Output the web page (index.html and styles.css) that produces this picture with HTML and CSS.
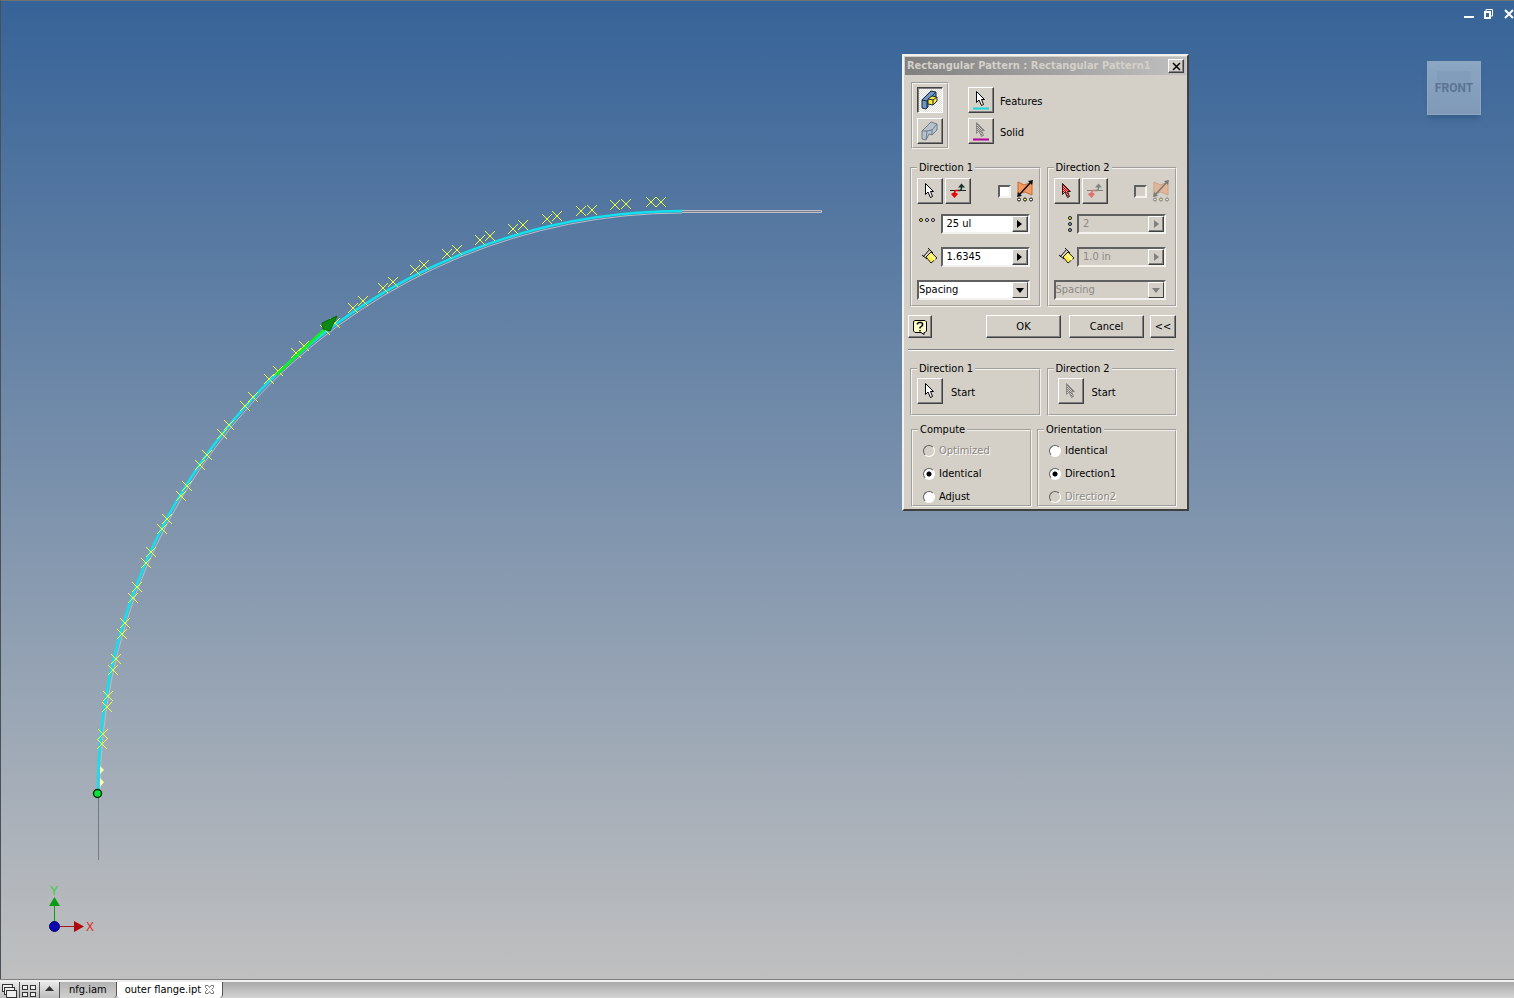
FILE: index.html
```html
<!DOCTYPE html>
<html lang="en">
<head>
  <meta charset="UTF-8">
  <meta name="viewport" content="width=device-width, initial-scale=1.0">
  <title>outer flange.ipt</title>
  <link rel="stylesheet" href="styles.css">
</head>
<body>
  <!-- Shared icons -->
  <svg class="defs" width="0" height="0" aria-hidden="true">
    <defs>
      <path id="x" d="M-5 -5L5 5M-5 5L5 -5"/>
      <path id="cursor" d="M1.500 .5V11.500L4 9L6.500 14.500L8.500 13.500L6.500 8.500H9.500Z"/>
      <pattern id="dither" width="2" height="2" patternUnits="userSpaceOnUse">
        <rect width="2" height="2" fill="#d4d0c8"/>
        <path d="M0 0h1v1H0zM1 1h1v1H1z" fill="#777"/>
      </pattern>
      <pattern id="ditherRed" width="2" height="2" patternUnits="userSpaceOnUse">
        <rect width="2" height="2" fill="#ff9090"/>
        <path d="M0 0h1v1H0zM1 1h1v1H1z" fill="#e00000"/>
      </pattern>
      <g id="flip">
        <path d="M1 8.500H6M12 8.500H17" stroke="#222" fill="none"/>
        <path d="M9 8.500H7C6 8.500 5.500 9 5.500 12" stroke="#f00000" stroke-width="1.500" fill="none"/>
        <path d="M2 12L5.500 10L9 12L5.500 16Z" fill="#f00000"/>
        <path d="M9 8.500H11C12 8.500 12.500 8 12.500 5" stroke="#163030" stroke-width="1.500" fill="none"/>
        <path d="M9 5.500H16L12.500 1.500Z" fill="#163030"/>
      </g>
      <g id="midplane">
        <path d="M2 2L8 5L16 2V15L9 12L2 14Z" fill="#f59a62" stroke="#c36a32"/>
        <path d="M3 15L15 2" stroke="#111" stroke-width="1.500"/>
        <path d="M17 0L16 5L12 1ZM1 17L2 12L6 16Z" fill="#111"/>
        <g fill="#fff" stroke="#111"><circle cx="3" cy="19.500" r="1.500"/><circle cx="9" cy="19.500" r="1.500" fill="#ff5"/><circle cx="15" cy="19.500" r="1.500"/></g>
      </g>
      <g id="spacing">
        <path d="M4 9L9 4L15 10L9 15Z" fill="#ffec4a" stroke="#222"/>
        <path d="M8 7L13 12" stroke="#fff9ac" stroke-width="2"/>
        <path d="M1 9L8 1M0 7L5 11M6 0L11 5" stroke="#111" fill="none"/>
      </g>
    </defs>
  </svg>

  <main class="viewport">
    <svg class="scene" width="100%" height="100%" aria-label="Sketch">
      <!-- flange profile -->
      <g fill="none">
        <path d="M682 210.500H821.500V212.500H682" stroke="#c3bfc7"/>
        <path d="M682 211.500H821" stroke="#777f94"/>
        <path d="M98.500 794V860" stroke="#77777c"/>
        <path d="M100 793A583 582 0 0 1 682 213" stroke="#b8bec9"/>
        <path d="M98 793A584 582 0 0 1 682 211" stroke="#12e0ee" stroke-width="2.500"/>
      </g>

      <!-- pattern occurrences -->
      <g class="marks">
        <use href="#x" x="651" y="202"/><use href="#x" x="661" y="202"/>
        <use href="#x" x="615" y="205"/><use href="#x" x="626" y="204"/>
        <use href="#x" x="581" y="211"/><use href="#x" x="592" y="210"/>
        <use href="#x" x="547" y="219"/><use href="#x" x="557" y="216"/>
        <use href="#x" x="513" y="229"/><use href="#x" x="523" y="225"/>
        <use href="#x" x="480" y="240"/><use href="#x" x="490" y="236"/>
        <use href="#x" x="447" y="254"/><use href="#x" x="457" y="250"/>
        <use href="#x" x="415" y="270"/><use href="#x" x="424" y="265"/>
        <use href="#x" x="383" y="288"/><use href="#x" x="393" y="282"/>
        <use href="#x" x="353" y="308"/><use href="#x" x="363" y="301"/>
        <use href="#x" x="325" y="330"/><use href="#x" x="335" y="323"/>
        <use href="#x" x="296" y="353"/><use href="#x" x="304" y="346"/>
        <use href="#x" x="269" y="379"/><use href="#x" x="278" y="371"/>
        <use href="#x" x="245" y="406"/><use href="#x" x="253" y="397"/>
        <use href="#x" x="222" y="434"/><use href="#x" x="229" y="425"/>
        <use href="#x" x="200" y="465"/><use href="#x" x="207" y="455"/>
        <use href="#x" x="181" y="496"/><use href="#x" x="187" y="486"/>
        <use href="#x" x="162" y="529"/><use href="#x" x="167" y="519"/>
        <use href="#x" x="146" y="563"/><use href="#x" x="151" y="552"/>
        <use href="#x" x="133" y="598"/><use href="#x" x="137" y="587"/>
        <use href="#x" x="122" y="634"/><use href="#x" x="125" y="623"/>
        <use href="#x" x="113" y="670"/><use href="#x" x="116" y="659"/>
        <use href="#x" x="107" y="707"/><use href="#x" x="108" y="696"/>
        <use href="#x" x="102" y="744"/><use href="#x" x="103" y="734"/>
      </g>
      <path d="M100 766L104 770L100 774ZM100 778L104 782L100 787Z" fill="#ffffb4"/>
      <circle cx="97.500" cy="793.500" r="4" fill="#0be43c" stroke="#063006" stroke-width="1.500"/>

      <!-- pattern direction -->
      <path d="M276 375L328 326" stroke="#10f020" stroke-width="2.500"/>
      <path d="M337 316L322 323L323 329L330 331Z" fill="#0a8a12" stroke="#066b0b"/>

      <!-- axis triad -->
      <path d="M54.500 926V906" stroke="#0c9c14"/>
      <path d="M54.500 897L60 906H49Z" fill="#0c9c14"/>
      <path d="M54 926.500H75" stroke="#a81818"/>
      <path d="M74 921L84 926.500L74 932Z" fill="#b00808"/>
      <circle cx="54.500" cy="926.500" r="5" fill="#0808b0" stroke="#040470"/>
      <text class="axis" x="50" y="895" fill="#2fd23a">Y</text>
      <text class="axis" x="86" y="931" fill="#e02828">X</text>
    </svg>

    <div class="window-buttons">
      <button type="button" aria-label="Minimize"><svg width="12" height="12"><path d="M2 9H12" stroke="#fff" stroke-width="2"/></svg></button>
      <button type="button" aria-label="Restore"><svg width="12" height="12" fill="none" stroke="#fff"><path d="M4 3V1.500H10.500V8H9"/><rect x="3" y="4" width="5" height="6" stroke-width="2"/></svg></button>
      <button type="button" aria-label="Close"><svg width="12" height="12"><path d="M3 2L11 10M11 2L3 10" stroke="#fff" stroke-width="2"/></svg></button>
    </div>

    <button type="button" class="view-cube"><span>FRONT</span></button>

    <form class="dialog">
      <div class="title-bar">
        <span>Rectangular Pattern : Rectangular Pattern1</span>
        <button type="button" class="close" aria-label="Close"><svg width="9" height="9"><path d="M1 1L8 8M8 1L1 8" stroke="#000" stroke-width="1.500"/></svg></button>
      </div>

      <div class="dialog-body">
        <div class="selectors">
          <div class="mode">
            <button type="button" class="tool pressed" aria-label="Pattern features">
              <svg width="20" height="20" stroke="#182a3c" stroke-linejoin="round">
                <path d="M2 10L11 1L16 2V6L8 11V17L6 19L2 18Z" fill="#6d98c4"/>
                <path d="M2 10L7 11L16 2M7 11V18" fill="none"/>
                <path d="M8 9L12 6L17 7V11L13 15L8 14Z" fill="#ffe93c"/>
                <path d="M8 9L13 10L17 7M13 10V15" fill="none"/>
              </svg>
            </button>
            <button type="button" class="tool" aria-label="Pattern solid">
              <svg width="20" height="20" stroke="#6f7b88" stroke-linejoin="round">
                <path d="M2 10L11 1L17 3V9L12 14L9 13L6 19L2 18Z" fill="#b5c2cf"/>
                <path d="M2 10L7 10L12 9L17 3M7 10L6 18M12 9V14" fill="none"/>
              </svg>
            </button>
          </div>
          <div class="picks">
            <div class="pick">
              <button type="button" id="features" class="tool"><svg width="20" height="22"><use href="#cursor" x="4" y="2" fill="#fff" stroke="#000"/><path d="M2 19.500H18" stroke="#18d6d6" stroke-width="2"/></svg></button>
              <label for="features">Features</label>
            </div>
            <div class="pick">
              <button type="button" id="solid" class="tool"><svg width="20" height="22"><use href="#cursor" x="4" y="2" fill="url(#dither)" stroke="#888"/><path d="M2 19.500H18" stroke="#b4009c" stroke-width="2"/></svg></button>
              <label for="solid">Solid</label>
            </div>
          </div>
        </div>

        <div class="columns">
          <fieldset class="direction">
            <legend>Direction 1</legend>
            <div class="tools">
              <button type="button" class="tool" aria-label="Path"><svg width="18" height="18"><use href="#cursor" x="3" y="1" fill="#fff" stroke="#000"/></svg></button>
              <button type="button" class="tool" aria-label="Flip"><svg width="18" height="18"><use href="#flip"/></svg></button>
              <input type="checkbox" id="mid1">
              <label for="mid1" aria-label="Midplane"><svg width="18" height="22"><use href="#midplane"/></svg></label>
            </div>
            <div class="field">
              <label for="count1" aria-label="Count"><svg width="18" height="18" fill="#fff" stroke="#111"><circle cx="4" cy="5" r="1.500" fill="#ff5"/><circle cx="10" cy="5" r="1.500"/><circle cx="16" cy="5" r="1.500"/></svg></label>
              <div class="spin"><input type="text" id="count1" value="25 ul"><button type="button" aria-label="More"><span class="right"></span></button></div>
            </div>
            <div class="field">
              <label for="space1" aria-label="Spacing"><svg width="20" height="18"><use href="#spacing" x="5"/></svg></label>
              <div class="spin"><input type="text" id="space1" value="1.6345"><button type="button" aria-label="More"><span class="right"></span></button></div>
            </div>
            <div class="combo">
              <select aria-label="Spacing type"><option>Spacing</option></select>
              <span class="drop"><span class="down"></span></span>
            </div>
          </fieldset>

          <fieldset class="direction">
            <legend>Direction 2</legend>
            <div class="tools">
              <button type="button" class="tool" aria-label="Path"><svg width="18" height="18"><use href="#cursor" x="3" y="1" fill="url(#ditherRed)" stroke="#222"/></svg></button>
              <button type="button" class="tool" aria-label="Flip" disabled><svg width="18" height="18" class="faded"><use href="#flip"/></svg></button>
              <input type="checkbox" id="mid2" disabled>
              <label for="mid2" aria-label="Midplane"><svg width="18" height="22" class="faded"><use href="#midplane"/></svg></label>
            </div>
            <div class="field">
              <label for="count2" aria-label="Count"><svg width="18" height="18" fill="#9cb4d8" stroke="#111"><circle cx="16" cy="3" r="1.500" fill="#ff5"/><circle cx="16" cy="9" r="1.500"/><circle cx="16" cy="15" r="1.500"/></svg></label>
              <div class="spin off"><input type="text" id="count2" value="2" disabled><button type="button" aria-label="More" disabled><span class="right"></span></button></div>
            </div>
            <div class="field">
              <label for="space2" aria-label="Spacing"><svg width="20" height="18"><use href="#spacing" x="5"/></svg></label>
              <div class="spin off"><input type="text" id="space2" value="1.0 in" disabled><button type="button" aria-label="More" disabled><span class="right"></span></button></div>
            </div>
            <div class="combo off">
              <select aria-label="Spacing type" disabled><option>Spacing</option></select>
              <span class="drop"><span class="down"></span></span>
            </div>
          </fieldset>
        </div>

        <div class="actions">
          <button type="button" class="help" aria-label="Help"><svg width="16" height="16"><path d="M1.500 2.500L3 1.500H13L14.500 3V12L13 13.500H12V15.500L9 13.500H3L1.500 12Z" fill="#ffffc8" stroke="#000"/><path d="M5.500 5.500V4.500L7 3.500H9L10.500 4.500V6.500L8 8.500V9.500M8 11V12.500" fill="none" stroke="#000" stroke-width="1.500"/></svg></button>
          <button type="submit" class="wide">OK</button>
          <button type="button" class="wide">Cancel</button>
          <button type="button" class="less">&lt;&lt;</button>
        </div>

        <hr>

        <div class="columns">
          <fieldset class="start">
            <legend>Direction 1</legend>
            <div class="pick">
              <button type="button" id="start1" class="tool"><svg width="18" height="18"><use href="#cursor" x="3" y="1" fill="#fff" stroke="#000"/></svg></button>
              <label for="start1">Start</label>
            </div>
          </fieldset>
          <fieldset class="start second">
            <legend>Direction 2</legend>
            <div class="pick">
              <button type="button" id="start2" class="tool" disabled><svg width="18" height="18"><use href="#cursor" x="3" y="1" fill="url(#dither)" stroke="#888"/></svg></button>
              <label for="start2">Start</label>
            </div>
          </fieldset>
        </div>

        <div class="columns options">
          <fieldset>
            <legend>Compute</legend>
            <label><input type="radio" name="compute" disabled><span>Optimized</span></label>
            <label><input type="radio" name="compute" checked><span>Identical</span></label>
            <label><input type="radio" name="compute"><span>Adjust</span></label>
          </fieldset>
          <fieldset>
            <legend>Orientation</legend>
            <label><input type="radio" name="orientation"><span>Identical</span></label>
            <label><input type="radio" name="orientation" checked><span>Direction1</span></label>
            <label><input type="radio" name="orientation" disabled><span>Direction2</span></label>
          </fieldset>
        </div>
      </div>
    </form>
  </main>

  <nav class="tabs">
    <button type="button" class="tab-tool" aria-label="Cascade"><svg width="18" height="16" fill="#eee" stroke="#333"><rect x="2.500" y="2.500" width="10" height="7"/><rect x="4.500" y="5.500" width="10" height="7"/><rect x="6.500" y="8.500" width="10" height="7"/></svg></button>
    <button type="button" class="tab-tool" aria-label="Tile"><svg width="18" height="16" fill="#eee" stroke="#333"><rect x="2.500" y="3.500" width="5" height="4"/><rect x="10.500" y="3.500" width="5" height="4"/><rect x="2.500" y="10.500" width="5" height="4"/><rect x="10.500" y="10.500" width="5" height="4"/></svg></button>
    <button type="button" class="tab-tool" aria-label="More"><svg width="18" height="16"><path d="M5 9L9.500 4L14 9Z" fill="#333"/></svg></button>
    <a href="#" class="tab">nfg.iam</a>
    <a href="#" class="tab active">outer flange.ipt
      <svg width="9" height="9" fill="#fff" stroke="#777"><path d="M.5 .5H3L4.500 2.500L6 .5H8.500V2.500L6.500 4.500L8.500 6.500V8.500H6L4.500 6.500L3 8.500H.5V6.500L2.500 4.500L.5 2.500Z"/></svg>
    </a>
  </nav>
</body>
</html>
```
FILE: styles.css
```css
* {
  box-sizing: border-box;
}

body {
  margin: 0;
  height: 100vh;
  display: flex;
  flex-direction: column;
  overflow: hidden;
  font-family: "DejaVu Sans Condensed", "DejaVu Sans", sans-serif;
  font-size: 11px;
  line-height: 14px;
  color: #000;
}

button, input, select {
  font: inherit;
  color: inherit;
  margin: 0;
  padding: 0;
}

svg {
  display: block;
  flex: none;
}

.defs {
  position: absolute;
}

/* Graphics window */
.viewport {
  flex: 1;
  min-height: 0;
  position: relative;
  border-top: 1px solid #6d7172;
  border-left: 1px solid #4a5058;
  background: linear-gradient(#366398, #c0c0c0);
}

.scene {
  position: absolute;
  top: -1px;
  left: -1px;
}

.marks {
  stroke: #e8ff3a;
  stroke-width: 1;
}

.axis {
  font-family: "Liberation Sans", Arial, sans-serif;
  font-size: 12px;
}

.window-buttons {
  position: absolute;
  top: 7px;
  right: 0;
  display: flex;
  gap: 8px;
}

.window-buttons button {
  border: none;
  background: none;
}

.view-cube {
  position: absolute;
  top: 60px;
  right: 33px;
  display: flex;
  width: 54px;
  height: 54px;
  padding: 9px;
  border: 1px solid #8ea6c0;
  background: linear-gradient(#8ba6c3, #7f99b6);
  box-shadow: 0 5px 5px -2px #365b86;
  color: #5d7493;
  font-family: Roboto, "Liberation Sans", sans-serif;
  font-size: 12px;
  font-weight: bold;
}

.view-cube span {
  flex: 1;
  display: flex;
  align-items: center;
  justify-content: center;
  align-self: stretch;
  min-width: 0;
  background: #829dbb;
}

/* Dialog */
.dialog {
  position: absolute;
  top: 53px;
  right: 325px;
  width: 287px;
  padding: 1px;
  border: 2px solid;
  border-color: #f4f2ee #404040 #404040 #f4f2ee;
  background: #d4d0c8;
}

.title-bar {
  display: flex;
  align-items: center;
  justify-content: space-between;
  height: 18px;
  padding: 0 2px;
  background: linear-gradient(90deg, #808080, #c0c0c0);
  color: #d4d0c8;
  font-weight: bold;
  white-space: nowrap;
}

.dialog button {
  display: flex;
  align-items: center;
  justify-content: center;
  border: 1px solid;
  border-color: #fff #404040 #404040 #fff;
  box-shadow: inset -1px -1px #808080;
  background: #d4d0c8;
}

.dialog .close {
  width: 16px;
  height: 14px;
}

.dialog-body {
  padding: 7px 9px 1px 5px;
}

.selectors {
  display: flex;
  gap: 19px;
  margin-left: 1px;
}

.mode {
  display: flex;
  flex-direction: column;
  gap: 5px;
  width: 38px;
  padding: 3px 4px;
  border: 2px groove #f4f2ee;
}

.picks {
  display: flex;
  flex-direction: column;
  gap: 5px;
  padding-top: 5px;
}

.pick {
  display: flex;
  align-items: center;
  gap: 6px;
}

.pick label {
  padding-top: 4px;
}

.dialog .tool {
  width: 26px;
  height: 26px;
  flex: none;
}

.dialog .pressed {
  border-color: #404040 #fff #fff #404040;
  box-shadow: inset 1px 1px #808080;
  background: repeating-conic-gradient(#fff 0 25%, #dedbd5 0 50%) 0 0 / 2px 2px;
}

.faded {
  opacity: 0.45;
}

.columns {
  display: flex;
  gap: 6px;
}

fieldset {
  flex: 1;
  min-width: 0;
  margin: 0;
  padding: 0 5px;
  border: 2px groove #f4f2ee;
}

legend {
  padding: 0 2px;
}

.direction {
  margin-top: 12px;
  padding: 0 5px 5px;
}

.tools {
  display: flex;
  align-items: center;
  gap: 2px;
  height: 26px;
  margin: 3px 0 10px;
}

.tools input {
  margin: 0 3px 0 auto;
}

input[type="checkbox"] {
  appearance: none;
  width: 13px;
  height: 13px;
  border: 2px solid;
  border-color: #606060 #f4f2ee #f4f2ee #606060;
  background: #fff;
}

input[type="checkbox"]:disabled {
  background: #d4d0c8;
}

.field {
  display: flex;
  align-items: center;
  justify-content: space-between;
  margin: 0 4px 13px 0;
}

.spin, .combo {
  display: flex;
  height: 20px;
  border: 2px solid;
  border-color: #606060 #f4f2ee #f4f2ee #606060;
  background: #fff;
}

.spin {
  width: 89px;
}

.spin input {
  flex: 1;
  min-width: 0;
  padding-left: 4px;
  border: none;
  background: none;
}

.spin button {
  width: 16px;
}

.combo {
  position: relative;
  margin-right: 4px;
}

.combo select {
  appearance: none;
  width: 100%;
  border: none;
  background: none;
  opacity: 1;
}

.drop {
  position: absolute;
  top: 0;
  right: 0;
  bottom: 0;
  width: 16px;
  display: flex;
  align-items: center;
  justify-content: center;
  border: 1px solid;
  border-color: #fff #404040 #404040 #fff;
  background: #d4d0c8;
  pointer-events: none;
}

.spin.off, .combo.off {
  background: #d4d0c8;
  color: #8c8983;
}

.right {
  border: 4px solid transparent;
  border-left: 5px solid #000;
  border-right: none;
}

.down {
  border: 4px solid transparent;
  border-top: 5px solid #000;
  border-bottom: none;
}

.off .right {
  border-left-color: #808080;
}

.off .down {
  border-top-color: #808080;
}

.actions {
  display: flex;
  gap: 8px;
  height: 23px;
  margin: 8px 1px 11px -2px;
}

.help {
  width: 24px;
  margin-right: auto;
}

.wide {
  width: 75px;
}

.less {
  width: 26px;
  margin-left: -2px;
}

hr {
  height: 2px;
  margin: 0 3px 11px -2px;
  border: none;
  border-top: 1px solid #808080;
  border-bottom: 1px solid #fff;
}

.start {
  height: 54px;
}

.start .pick {
  gap: 8px;
  padding-top: 2px;
}

.second .pick {
  padding-left: 4px;
}

.options {
  gap: 5px;
  margin: 7px 0 0 1px;
}

.options fieldset {
  flex: 0 0 121px;
  padding: 2px 5px 0;
}

.options fieldset:last-child {
  flex: 1;
}

.options label {
  display: flex;
  align-items: center;
  gap: 4px;
  height: 23px;
  padding-left: 5px;
}

.options label:last-child {
  height: 20px;
  padding-top: 3px;
}

input[type="radio"] {
  appearance: none;
  width: 12px;
  height: 12px;
  border: 1px solid;
  border-color: #606060 #fff #fff #606060;
  border-radius: 50%;
  background: #fff;
}

input[type="radio"]:checked {
  background: radial-gradient(#000 0 2px, #fff 3px);
}

input[type="radio"]:disabled {
  background: #d4d0c8;
}

input:disabled + span {
  color: #8c8983;
  text-shadow: 1px 1px #fff;
}

/* Document tabs */
.tabs {
  display: flex;
  height: 18px;
  flex: none;
  border-top: 2px solid #f0f0f0;
  background: linear-gradient(#a8a8a8, #d4d4d4);
  box-shadow: 0 -1px #808080;
  z-index: 1;
}

.tab-tool {
  width: 20px;
  border: none;
  border-right: 1px solid #555;
  background: linear-gradient(#e8e8e8, #bdbdbd);
}

.tab {
  display: flex;
  align-items: center;
  gap: 4px;
  padding: 0 9px;
  border-right: 1px solid #555;
  border-radius: 0 0 4px 4px;
  background: linear-gradient(#b4b4b4, #d0d0d0);
  color: #000;
  text-decoration: none;
}

.tab.active {
  padding: 0 8px;
  background: #fff;
}

.tab svg {
  margin-bottom: 2px;
}
```
